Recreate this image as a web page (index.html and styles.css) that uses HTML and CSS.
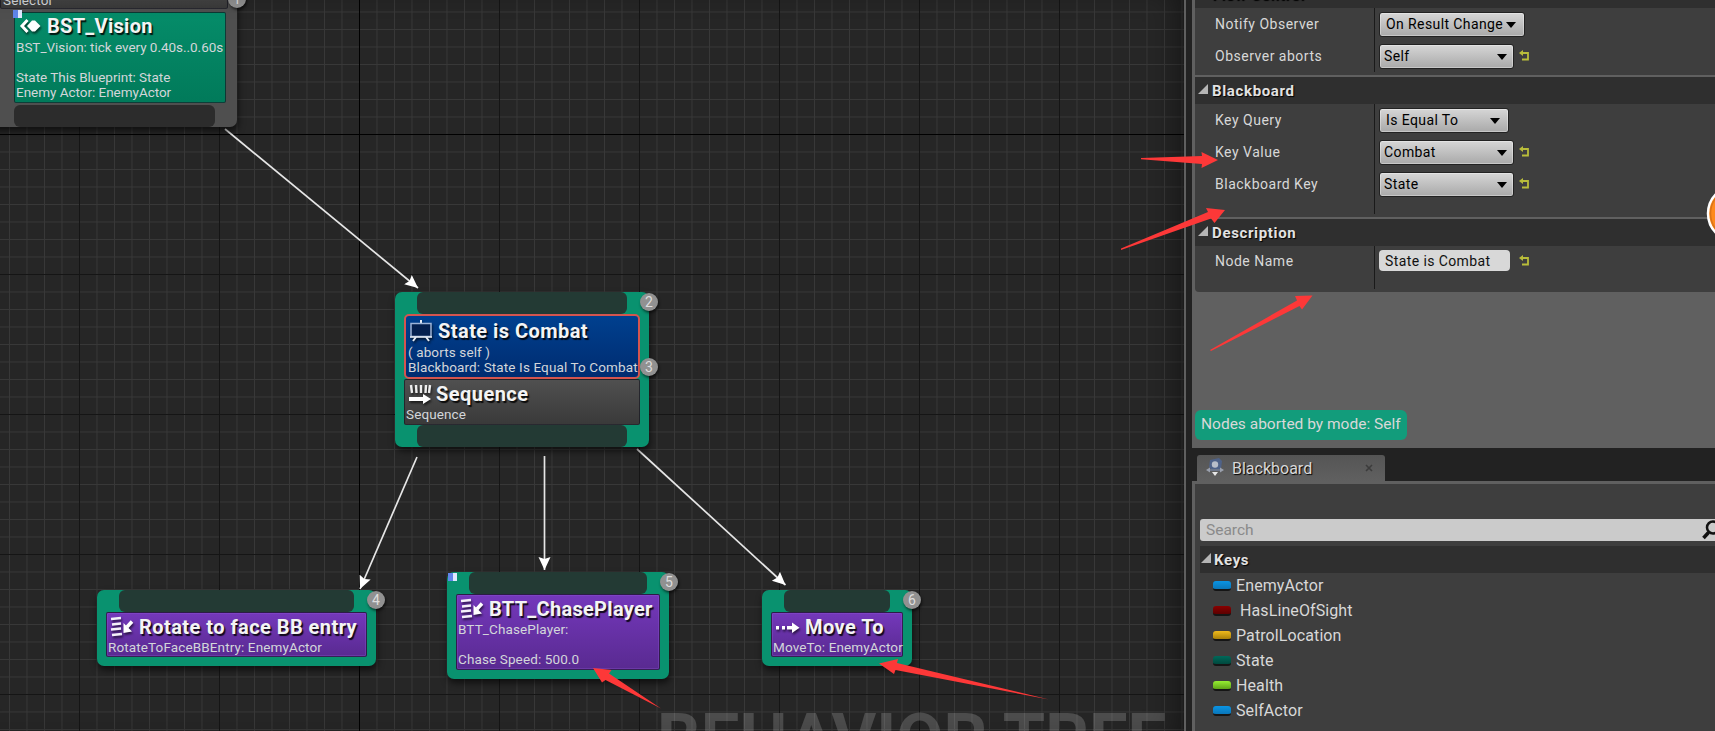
FILE: index.html
```html
<!DOCTYPE html>
<html lang="en">
<head>
  <meta charset="UTF-8" />
  <title>Behavior Tree Editor</title>
  <link rel="stylesheet" href="styles.css">
</head>
<body>
  <div class="editor">
    <!-- Graph canvas -->
    <main class="graph">
      <div class="watermark">BEHAVIOR TREE</div>

      <svg class="wires" width="1184" height="731">
        <defs>
          <marker id="head" markerWidth="15" markerHeight="13" refX="13" refY="6" orient="auto" markerUnits="userSpaceOnUse">
            <path d="M0 0 L13 6 L0 12 L2 6 Z" fill="#fff" />
          </marker>
        </defs>
        <g stroke="#e6e6e6" stroke-width="1.700" marker-end="url(#head)">
          <path d="M225 129 L418 288" />
          <path d="M417 457 L360 589" />
          <path d="M544.500 456 V570" />
          <path d="M637 449 L785.500 585" />
        </g>
      </svg>

      <section class="node node-selector">
        <div class="box box-grey selector-box"><p>Selector</p></div>
        <div class="box box-green">
          <h2>
            <svg class="icon" width="24" height="18"><path d="M9.500 3 L4 9 L9.500 15" fill="none" stroke="#fff" stroke-width="3" /><path d="M9 9 L14 3.500 H17 L22.500 9 L17 14.500 H14 Z" fill="#fff" /></svg>
            BST_Vision
          </h2>
          <p>BST_Vision: tick every 0.40s..0.60s</p>
          <p>&nbsp;</p>
          <p>State This Blueprint: State</p>
          <p>Enemy Actor: EnemyActor</p>
        </div>
        <div class="slot"></div>
        <span class="badge">1</span>
        <span class="flag"></span>
      </section>

      <section class="node node-combat">
        <div class="slot"></div>
        <div class="box box-blue">
          <h2>
            <svg class="icon" width="24" height="24"><path d="M12 1 V5 M7 18 L4 22 M17 18 L20 22" stroke="#e4ebf5" stroke-width="2" /><rect x="2" y="4.500" width="20" height="13" fill="#04204f" stroke="#9db4d8" stroke-width="1.500" /><path d="M1 18 H23" stroke="#e4ebf5" stroke-width="1.500" /></svg>
            State is Combat
          </h2>
          <p>( aborts self )</p>
          <p>Blackboard: State Is Equal To Combat</p>
        </div>
        <div class="box box-grey">
          <h2>
            <svg class="icon" width="24" height="22"><path d="M3 2 L4 10 M8 2 L8.500 10 M13 2 V10 M18 2 L17.500 10 M22 2 L21 10" stroke="#eee" stroke-width="2.400" /><path d="M1 14 H15 V11 L23 16 L15 21 V18 H1 Z" fill="#fff" /></svg>
            Sequence
          </h2>
          <p>Sequence</p>
        </div>
        <div class="slot"></div>
        <span class="badge">2</span>
        <span class="badge badge-low">3</span>
      </section>

      <section class="node node-rotate">
        <div class="slot"></div>
        <div class="box box-purple">
          <h2>
            <svg class="icon" width="24" height="22"><path d="M1 3 L11 2 M2 8.500 L11 7.500 M1 13.500 L11 12.500 M2 19 L12 18" stroke="#f4f0f8" stroke-width="2.400" /><path d="M22 5.500 L17 11" stroke="#fff" stroke-width="3.500" /><path d="M13.500 7 L22 15.500 L13.500 17 Z" fill="#fff" /></svg>
            Rotate to face BB entry
          </h2>
          <p>RotateToFaceBBEntry: EnemyActor</p>
        </div>
        <span class="badge">4</span>
      </section>

      <section class="node node-chase">
        <div class="slot"></div>
        <div class="box box-purple">
          <h2>
            <svg class="icon" width="24" height="22"><path d="M1 3 L11 2 M2 8.500 L11 7.500 M1 13.500 L11 12.500 M2 19 L12 18" stroke="#f4f0f8" stroke-width="2.400" /><path d="M22 5.500 L17 11" stroke="#fff" stroke-width="3.500" /><path d="M13.500 7 L22 15.500 L13.500 17 Z" fill="#fff" /></svg>
            BTT_ChasePlayer
          </h2>
          <p>BTT_ChasePlayer:</p>
          <p>&nbsp;</p>
          <p>Chase Speed: 500.0</p>
        </div>
        <span class="badge">5</span>
        <span class="flag"></span>
      </section>

      <section class="node node-move">
        <div class="slot"></div>
        <div class="box box-purple">
          <h2>
            <svg class="icon" width="25" height="18"><path d="M1 8 H4 V11.500 H1 Z M7 8 H10 V11.500 H7 Z M12 8 H17 V4.500 L24.500 9.700 L17 15 V11.500 H12 Z" fill="#fff" /></svg>
            Move To
          </h2>
          <p>MoveTo: EnemyActor</p>
        </div>
        <span class="badge">6</span>
      </section>
    </main>

    <!-- Right side panels -->
    <aside class="side">
      <div class="details">
        <div class="cat-head cat-cut">Flow Control</div>
        <div class="cat-body flow">
          <div class="row"><label>Notify Observer</label><div class="value"><button class="combo combo-wide">On Result Change</button></div></div>
          <div class="row"><label>Observer aborts</label><div class="value"><button class="combo">Self</button><svg class="reset" width="12" height="12"><path d="M2.500 3 H9 V9.500 H3" /><path d="M4 0 L0 3 L4 6 Z" class="tip" /></svg></div></div>
        </div>

        <div class="cat-head"><i class="tri"></i>Blackboard</div>
        <div class="cat-body board">
          <div class="row"><label>Key Query</label><div class="value"><button class="combo combo-query">Is Equal To</button></div></div>
          <div class="row"><label>Key Value</label><div class="value"><button class="combo">Combat</button><svg class="reset" width="12" height="12"><path d="M2.500 3 H9 V9.500 H3" /><path d="M4 0 L0 3 L4 6 Z" class="tip" /></svg></div></div>
          <div class="row"><label>Blackboard Key</label><div class="value"><button class="combo">State</button><svg class="reset" width="12" height="12"><path d="M2.500 3 H9 V9.500 H3" /><path d="M4 0 L0 3 L4 6 Z" class="tip" /></svg></div></div>
        </div>

        <div class="cat-head"><i class="tri"></i>Description</div>
        <div class="cat-body desc">
          <div class="row"><label>Node Name</label><div class="value"><input class="text" type="text" value="State is Combat" /><svg class="reset" width="12" height="12"><path d="M2.500 3 H9 V9.500 H3" /><path d="M4 0 L0 3 L4 6 Z" class="tip" /></svg></div></div>
        </div>

        <div class="abort-note">Nodes aborted by mode: Self</div>
      </div>

      <div class="tabs">
        <div class="tab">
          <svg width="20" height="20"><path d="M5 2 L14 0 L17 3 L16 11 L7 12 L4 9 Z" fill="#4f6288" /><circle cx="10" cy="6.500" r="3.200" fill="#b9bec9" /><path d="M1 12 L5 9.500 V14.500 Z M19 12 L15 9.500 V14.500 Z" fill="#9aa0ad" /><path d="M5 12 H15" stroke="#6c768a" stroke-width="2" /><path d="M7 14 H13 L10 18 Z" fill="#e8e8e8" /></svg>
          <span>Blackboard</span>
          <svg class="close" width="8" height="8"><path d="M1 1 L7 7 M7 1 L1 7" stroke="#3c3c3c" stroke-width="1.600" /></svg>
        </div>
      </div>

      <div class="blackboard">
        <div class="search">
          <span>Search</span>
          <svg width="18" height="20"><circle cx="11" cy="7.500" r="6" fill="none" stroke="#111" stroke-width="2.500" /><path d="M6.500 12.500 L1.500 18" stroke="#111" stroke-width="3.500" /></svg>
        </div>
        <div class="keys-head"><i class="tri"></i>Keys</div>
        <ul class="keys">
          <li><i class="pill blue"></i>EnemyActor</li>
          <li><i class="pill red"></i><span class="indent">HasLineOfSight</span></li>
          <li><i class="pill yellow"></i>PatrolLocation</li>
          <li><i class="pill teal"></i>State</li>
          <li><i class="pill lime"></i>Health</li>
          <li><i class="pill blue"></i>SelfActor</li>
        </ul>
      </div>
    </aside>
  </div>

  <!-- Annotation arrows -->
  <svg class="notes" width="1715" height="731">
    <g fill="#fd3838">
      <path d="M1141 158 L1202 156 L1201.500 152 L1218 160 L1201.500 168 L1202 164 L1141 159.300 Z" />
      <path d="M1121 248.500 L1208 212 L1206 208 L1225 210 L1214.500 223 L1211 218.500 L1121 250 Z" />
      <path d="M1210 350 L1297 300.500 L1295 296 L1312.500 295.500 L1302 309.500 L1299.500 306 L1211 351 Z" />
      <path d="M661 708.500 L609 673.500 L611.500 670 L593 668 L602 682.500 L605.500 680 Z" />
      <path d="M1049 699.500 L897 663 L898 659 L879 663.500 L894 674 L895.500 670 Z" />
    </g>
    <circle cx="1736" cy="213.500" r="28" fill="#ff8a1c" stroke="#fff" stroke-width="2.500" />
    <circle cx="1736" cy="213.500" r="25.500" fill="none" stroke="#d8741a" stroke-width="1.500" />
  </svg>
</body>
</html>
```
FILE: styles.css
```css
* {
  box-sizing: border-box;
}
body {
  margin: 0;
  width: 1715px;
  height: 731px;
  overflow: hidden;
  background: #222;
  font-family: Roboto, "Liberation Sans", sans-serif;
  color: #d8d8d8;
}
h2, p, ul {
  margin: 0;
  padding: 0;
}
.editor {
  display: flex;
  height: 731px;
}

/* Graph */
.graph {
  position: relative;
  width: 1186px;
  flex: none;
  overflow: hidden;
  border-right: 2px solid #5f5f5f;
  background-color: #262626;
  background-image:
    linear-gradient(90deg, transparent 359px, #000 359px, #000 360px, transparent 360px),
    linear-gradient(transparent 134px, #000 134px, #000 135px, transparent 135px),
    linear-gradient(90deg, #151515 1px, transparent 1px),
    linear-gradient(#151515 1px, transparent 1px),
    linear-gradient(90deg, #383838 1px, transparent 1px),
    linear-gradient(#383838 1px, transparent 1px);
  background-size: auto, auto, 140px 140px, 140px 140px, 17.5px 17.5px, 17.5px 17.5px;
  background-position: 0 0, 0 0, 79px 0, 0 134px, 9px 0, 0 11.5px;
}
.graph::after {
  content: "";
  position: absolute;
  inset: 0;
  box-shadow: inset -20px 0 30px -14px rgba(0, 0, 0, 0.45);
}
.watermark {
  position: absolute;
  left: 657px;
  top: 705px;
  font-size: 68.5px;
  line-height: 68px;
  font-weight: 700;
  white-space: nowrap;
  color: rgba(255, 255, 255, 0.18);
}
.wires {
  position: absolute;
  left: 0;
  top: 0;
}
.node {
  position: absolute;
  display: flex;
  flex-direction: column;
  padding: 0 9px 9px;
  border-radius: 7px;
  background: #09926f;
  box-shadow: 1px 4px 7px rgba(0, 0, 0, 0.6);
}
.slot {
  flex: none;
  height: 22px;
  margin: 0 13px;
  border-radius: 6px;
  background: #233a34;
}
.box {
  flex: none;
  padding: 0 1px;
  border: 1px solid rgba(20, 20, 30, 0.65);
  border-radius: 2px;
  white-space: nowrap;
}
.box h2 {
  display: flex;
  align-items: center;
  gap: 5px;
  height: 27px;
  padding-left: 2px;
  font-size: 20px;
  line-height: 26px;
  font-weight: 700;
  letter-spacing: 0.45px;
  color: #f4f4f4;
  text-shadow: 1.5px 2px 1px rgba(0, 0, 0, 0.85);
}
.box p {
  font-size: 13.5px;
  line-height: 15px;
  letter-spacing: 0.12px;
  color: #d3d6da;
}
.icon {
  flex: none;
  filter: drop-shadow(1px 2px 1px rgba(0, 0, 0, 0.6));
}
.box-green {
  background: linear-gradient(#058c69, #017a5a);
}
.box-blue {
  background: linear-gradient(#00408f, #002c70);
}
.box-grey {
  background: linear-gradient(#505050, #3a3a3a);
}
.box-purple {
  background: linear-gradient(#7438bb, #592a91);
  box-shadow: inset 0 0 0 1px rgba(150, 90, 220, 0.3);
}
.badge {
  position: absolute;
  right: -9px;
  top: 1px;
  width: 18px;
  height: 18px;
  border-radius: 50%;
  background: #919191;
  box-shadow: 1px 2px 3px rgba(0, 0, 0, 0.6);
  font-size: 14px;
  line-height: 19px;
  text-align: center;
  color: #ddd;
}
.badge-low {
  top: 66px;
}
.flag {
  position: absolute;
  width: 9px;
  height: 8px;
  background: linear-gradient(90deg, #5f86ea 55%, #dfe8ff 55%);
}
.node-selector {
  left: -20px;
  top: -12px;
  width: 257px;
  height: 139px;
  background: #4f4f4f;
}
.node-selector .selector-box {
  height: 21px;
  margin: 0 0 3px 11px;
}
.node-selector .selector-box p {
  margin-top: 4px;
  padding-left: 1px;
}
.node-selector .box-green {
  width: 212px;
  height: 91px;
  margin-left: 25px;
}
.node-selector .box-green p {
  letter-spacing: -0.03px;
}
.node-selector .box-green h2 {
  letter-spacing: 0.3px;
  padding-bottom: 1px;
}
.node-selector .slot {
  width: 201px;
  margin: 2px 0 0 25px;
  background: #2c2c2c;
}
.node-selector .flag {
  left: 33px;
  top: 22px;
}
.node-selector .badge {
  top: 2px;
}
.node-combat {
  left: 395px;
  top: 292px;
  width: 254px;
  height: 155px;
}
.node-combat .box-blue {
  height: 65px;
  padding: 1px 0 0 1px;
  border: 2px solid #d4554f;
  border-radius: 5px;
}
.node-combat .box-blue h2 {
  height: 28px;
}
.node-combat .box-blue p {
  margin-right: -4px;
  padding-left: 1px;
}
.node-combat .box-grey {
  height: 46px;
}
.node-combat .box-grey h2 {
  gap: 4px;
}
.node-rotate {
  left: 97px;
  top: 590px;
  width: 279px;
  height: 76px;
}
.node-rotate .box,
.node-move .box {
  height: 45px;
}
.node-chase {
  left: 447px;
  top: 572px;
  width: 222px;
  height: 107px;
}
.node-chase .box {
  height: 76px;
}
.node-chase h2 {
  letter-spacing: 0.3px;
}
.node-chase .flag {
  left: 1px;
  top: 1px;
}
.node-move {
  left: 762px;
  top: 590px;
  width: 150px;
  height: 76px;
}

/* Side panels */
.side {
  display: flex;
  flex-direction: column;
  flex: 1;
  min-width: 0;
  padding-left: 6px;
  background: #222;
}
.details {
  flex: none;
  height: 448px;
  padding-left: 3px;
  overflow: hidden;
  background: #606060;
}
.cat-head,
.keys-head {
  display: flex;
  align-items: center;
  gap: 4px;
  height: 27px;
  padding-left: 3px;
  background: #2f2f2f;
  font-size: 15px;
  font-weight: 700;
  letter-spacing: 0.65px;
  color: #e2e2e2;
  text-shadow: 1px 1px 1px #000;
}
.cat-cut {
  margin-top: -19px;
  padding-left: 17px;
  color: #050505;
}
.tri {
  width: 10px;
  height: 10px;
  margin-top: -3px;
  background: #b5b5b5;
  clip-path: polygon(100% 0, 100% 100%, 0 100%);
}
.cat-body {
  background: linear-gradient(#1a1a1a, #1a1a1a) 179px 0 / 1px calc(100% - 3px) no-repeat #3e3e3e;
  margin-bottom: 2px;
}
.flow {
  height: 67px;
}
.board {
  height: 113px;
}
.desc {
  height: 46px;
  border-radius: 0 0 0 4px;
}
.row {
  display: flex;
  align-items: center;
  height: 32px;
  font-size: 14px;
  letter-spacing: 0.5px;
}
.row label {
  width: 184px;
  padding-left: 20px;
}
.value {
  display: flex;
  align-items: center;
  gap: 5px;
}
.combo {
  position: relative;
  width: 135px;
  height: 25px;
  padding: 0 4px;
  border: 1px solid #222;
  border-radius: 3px;
  background: linear-gradient(#d6d6d6, #a9a9a9);
  box-shadow: inset 0 0 0 1px rgba(255, 255, 255, 0.35);
  font: 14px Roboto, sans-serif;
  letter-spacing: 0.4px;
  text-align: left;
  white-space: nowrap;
  color: #000;
}
.combo::after {
  content: "";
  position: absolute;
  right: 6px;
  top: 9px;
  border: 5px solid transparent;
  border-top: 6px solid #000;
  border-bottom: 0;
}
.combo-wide {
  width: 146px;
  padding-left: 6px;
}
.combo-query {
  width: 130px;
  padding-left: 6px;
}
.combo-wide::after,
.combo-query::after {
  right: 8px;
}
.reset {
  fill: none;
  stroke: #b9bd3a;
  stroke-width: 1.8;
}
.reset .tip {
  fill: #b9bd3a;
  stroke: none;
}
.desc .row {
  height: 29px;
}
.text {
  width: 131px;
  height: 21px;
  padding: 0 6px;
  border: 0;
  border-radius: 4px;
  background: #d8d8d8;
  font: 14px Roboto, sans-serif;
  letter-spacing: 0.4px;
  color: #111;
}
.desc .value {
  gap: 9px;
}
.abort-note {
  width: 212px;
  height: 30px;
  margin-top: 118px;
  padding-left: 6px;
  border-radius: 6px;
  background: #129c7b;
  font-size: 15.5px;
  line-height: 29px;
  white-space: nowrap;
}
.tabs {
  flex: none;
  height: 33px;
  padding: 7px 0 0 5px;
}
.tab {
  display: flex;
  align-items: center;
  width: 188px;
  height: 26px;
  padding: 0 12px 0 8px;
  border-radius: 3px 3px 0 0;
  background: linear-gradient(#555, #606060);
  font-size: 16px;
  text-shadow: 1px 1px 1px #000;
}
.tab span {
  margin-left: 7px;
}
.close {
  margin-left: auto;
}
.blackboard {
  flex: 1;
  padding: 35px 0 0 5px;
  border-left: 3px solid #606060;
  border-top: 3px solid #606060;
  background: #3e3e3e;
}
.search {
  display: flex;
  align-items: center;
  justify-content: space-between;
  height: 22px;
  margin-bottom: 5px;
  padding-left: 6px;
  overflow: hidden;
  border-radius: 3px 0 0 3px;
  background: #cbcbcb;
  font-size: 15.5px;
  color: #8a8a8a;
}
.search svg {
  margin-right: -5px;
}
.keys-head {
  gap: 3px;
  padding-left: 1px;
}
.keys {
  list-style: none;
}
.keys li {
  display: flex;
  align-items: center;
  height: 25px;
  padding-left: 13px;
  font-size: 16px;
  letter-spacing: 0.1px;
}
.pill {
  width: 18px;
  height: 10px;
  margin-right: 5px;
  border-radius: 3px;
  border-bottom: 2px solid #151515;
}
.indent {
  padding-left: 4px;
}
.blue {
  background: linear-gradient(#0a94e4, #0a76b8);
}
.red {
  background: linear-gradient(#8a0000, #5c0000);
}
.yellow {
  background: linear-gradient(#f0bb1c, #a98009);
}
.teal {
  background: linear-gradient(#00695a, #00483d);
}
.lime {
  background: linear-gradient(#96ee32, #5fa318);
}

/* Annotations */
.notes {
  position: absolute;
  left: 0;
  top: 0;
  pointer-events: none;
}
```
